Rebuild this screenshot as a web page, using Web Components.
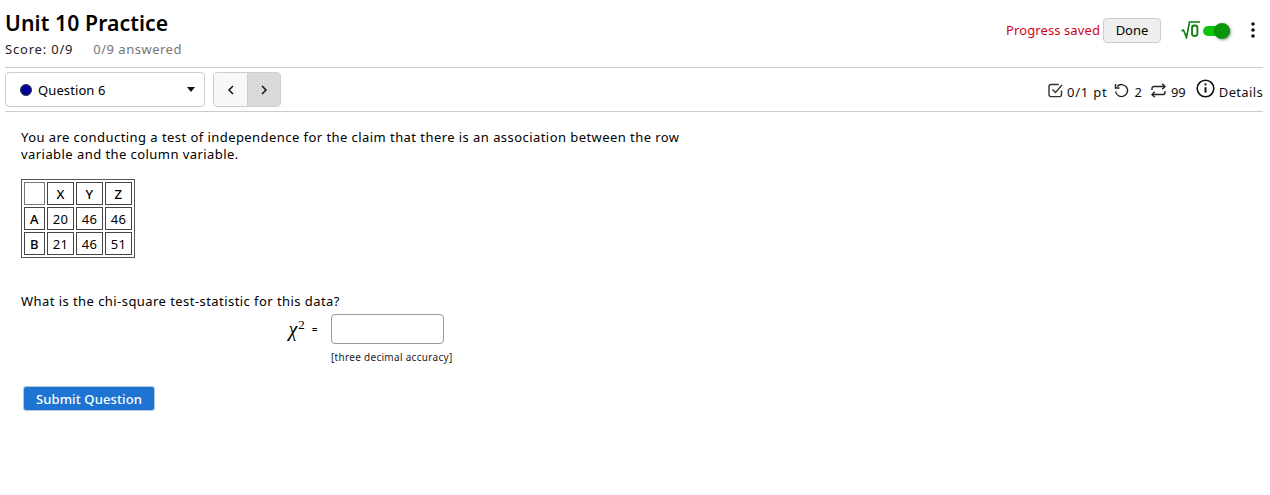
<!DOCTYPE html>
<html>
<head>
<meta charset="utf-8">
<title>Unit 10 Practice</title>
<style>
  body { margin: 0; background: #fff; font-family: "Noto Sans", "DejaVu Sans", sans-serif; color: #000; }
</style>
</head>
<body>
<assess-header title-text="Unit 10 Practice" score="Score: 0/9" answered="0/9 answered"></assess-header>
<question-bar label="Question 6"></question-bar>
<question-body>
  <p>You are conducting a test of independence for the claim that there is an association between the row<br>variable and the column variable.</p>
  <data-table></data-table>
  <p class="ask">What is the chi-square test-statistic for this data?</p>
  <chi-answer></chi-answer>
  <submit-button>Submit Question</submit-button>
</question-body>

<script>
const FONT = `"Noto Sans", "DejaVu Sans", sans-serif`

class AssessHeader extends HTMLElement {
  constructor() {
    super()
    const shadow = this.attachShadow({ mode: 'open' })
    shadow.innerHTML = `
    <style>
      :host { display: flex; justify-content: space-between; height: 67px; margin: 0 7px 0 5px; padding-right: 8px; border-bottom: 1px solid #ccc; font-family: ${FONT}; }
      h1 { margin: 8px 0 0; font-size: 21.2px; line-height: 29px; font-weight: 600; letter-spacing: .1px; }
      .sub { margin-top: 3px; font-size: 13px; line-height: 18px; display: flex; gap: 20px; color: #222; }
      .sub span { letter-spacing: .8px; }
      .sub span + span { color: #767676; letter-spacing: .5px; }
      .right { display: flex; align-items: center; height: 26px; margin-top: 17px; }
      .saved { color: #d0021b; font-size: 13px; letter-spacing: .1px; margin-right: 3px; }
      button { width: 58px; height: 25px; padding: 0; border: 1px solid #ccc; border-radius: 4px; background: #efefef; font: 13px ${FONT}; color: #000; }
      .sq { margin-left: 20px; display: block; }
      .toggle { position: relative; width: 27px; height: 10px; margin: 1px 0 0 3px; border-radius: 5px; background: #0fc40f; }
      .toggle::after { content: ""; position: absolute; right: 0; top: -3px; width: 16px; height: 16px; border-radius: 50%; background: #0a960a; box-shadow: 1px 1px 3px rgba(0,0,0,.4); }
      .dots { margin-left: 21px; display: block; }
    </style>
    <div>
      <h1>${this.getAttribute('title-text')}</h1>
      <div class="sub"><span>${this.getAttribute('score')}</span><span>${this.getAttribute('answered')}</span></div>
    </div>
    <div class="right">
      <span class="saved">Progress saved</span>
      <button>Done</button>
      <svg class="sq" width="19" height="18" viewBox="0 0 19 18" fill="none" stroke="#0a7d0a"><path d="M.5 10l2-1 3 7.5L8.5 1H19" stroke-width="1.6"/><rect x="11" y="4.5" width="5.4" height="10.5" rx="2.4" stroke-width="1.8"/></svg>
      <div class="toggle"></div>
      <svg class="dots" width="4" height="16" viewBox="0 0 4 16" fill="#111"><circle cx="2" cy="2" r="1.8"/><circle cx="2" cy="8" r="1.8"/><circle cx="2" cy="14" r="1.8"/></svg>
    </div>`
  }
}

class QuestionBar extends HTMLElement {
  constructor() {
    super()
    const shadow = this.attachShadow({ mode: 'open' })
    shadow.innerHTML = `
    <style>
      :host { display: flex; justify-content: space-between; align-items: center; height: 43px; margin: 0 7px 0 5px; border-bottom: 1px solid #ccc; font-family: ${FONT}; font-size: 13px; }
      .left { display: flex; gap: 8px; }
      .select { box-sizing: border-box; width: 200px; height: 35px; display: flex; align-items: center; border: 1px solid #ccc; border-radius: 4px; padding: 0 9px 0 14px; letter-spacing: .1px; }
      .dot { width: 12px; height: 12px; border-radius: 50%; background: #00009c; border: 1px solid #333; box-sizing: border-box; margin-right: 6px; }
      .label { flex: 1; }
      .caret { width: 0; height: 0; border: 4px solid transparent; border-top: 5px solid #111; border-bottom: 0; }
      .pager { display: flex; height: 35px; box-sizing: border-box; border: 1px solid #ccc; border-radius: 4px; overflow: hidden; }
      .pager div { width: 33px; display: flex; align-items: center; justify-content: center; background: #f7f7f7; }
      .pager div + div { width: 32px; background: #d9d9d9; border-left: 1px solid #ccc; }
      .meta { display: flex; align-items: center; color: #111; padding-top: 4px; }
      .meta svg { display: block; }
      .meta svg.up { margin-top: -6px; }
      .meta svg.ic { margin-top: -2px; }
    </style>
    <div class="left">
      <div class="select"><span class="dot"></span><span class="label">${this.getAttribute('label')}</span><span class="caret"></span></div>
      <div class="pager">
        <div><svg width="8" height="12" viewBox="0 0 8 12" fill="none" stroke="#111" stroke-width="1.5"><path d="M6 2L2 6l4 4"/></svg></div>
        <div><svg width="8" height="12" viewBox="0 0 8 12" fill="none" stroke="#111" stroke-width="1.5"><path d="M2 2l4 4-4 4"/></svg></div>
      </div>
    </div>
    <div class="meta">
      <svg class="ic" width="15" height="15" viewBox="0 0 15 15" fill="none" stroke="#333" stroke-width="1.4"><path d="M13.5 7.5v4.3a1.8 1.8 0 0 1-1.8 1.8H2.8A1.8 1.8 0 0 1 1 11.8V3.3a1.8 1.8 0 0 1 1.8-1.8h8"/><path d="M4.5 6.5l3 3 6.5-7.5"/></svg>
      <span style="margin-left:4px;letter-spacing:.8px">0/1 pt</span>
      <svg class="ic" style="margin-left:7px" width="15" height="15" viewBox="0 0 15 15" fill="none" stroke="#222" stroke-width="1.4"><path d="M3.2 3.4A6 6 0 1 1 1.6 8.5"/><path d="M1.5 1v4h4"/></svg>
      <span style="margin-left:5px">2</span>
      <svg class="ic" style="margin-left:9px" width="15" height="15" viewBox="0 0 15 15" fill="none" stroke="#222" stroke-width="1.4"><path d="M1 7V5.5A2 2 0 0 1 3 3.5h11"/><path d="M11.2 .8l2.8 2.7-2.8 2.7"/><path d="M14 8v1.5a2 2 0 0 1-2 2H1"/><path d="M3.8 8.8L1 11.5l2.8 2.7"/></svg>
      <span style="margin-left:5px">99</span>
      <svg class="up" style="margin-left:10px" width="19" height="19" viewBox="0 0 19 19" fill="none" stroke="#111" stroke-width="1.6"><circle cx="9.5" cy="9.5" r="8.3"/><path d="M9.5 8.2v5.4" stroke-width="2"/><circle cx="9.5" cy="5.4" r="1.1" fill="#111" stroke="none"/></svg>
      <span style="margin-left:4px;letter-spacing:.35px">Details</span>
    </div>`
  }
}

class QuestionBody extends HTMLElement {
  constructor() {
    super()
    const shadow = this.attachShadow({ mode: 'open' })
    shadow.innerHTML = `
    <style>
      :host { display: block; padding: 17px 21px 0; font-family: ${FONT}; font-size: 13px; line-height: 17px; letter-spacing: .44px; }
      ::slotted(p) { margin: 0; }
      ::slotted(.ask) { margin-top: 35px; }
    </style>
    <slot></slot>`
  }
}

class DataTable extends HTMLElement {
  constructor() {
    super()
    const shadow = this.attachShadow({ mode: 'open' })
    const rows = [['', 'X', 'Y', 'Z'], ['A', '20', '46', '46'], ['B', '21', '46', '51']]
    shadow.innerHTML = `
    <style>
      :host { display: block; margin-top: 16px; }
      table { border-collapse: separate; border-spacing: 2px; border: 1px solid #555; }
      td { box-sizing: border-box; height: 23px; padding: 1px 0 0; text-align: center; border: 1px solid #444; font-size: 13px; letter-spacing: .3px; line-height: 17px; }
      td:nth-child(1) { width: 21px; }
      td:nth-child(n+2) { width: 27px; }
      tr:first-child td:first-child { border-color: #777; }
      .h { font-weight: 500; }
    </style>
    <table>${rows.map((r, i) => `<tr>${r.map((c, j) => `<td class="${(i == 0 || j == 0) ? 'h' : ''}">${c}</td>`).join('')}</tr>`).join('')}</table>`
  }
}

class ChiAnswer extends HTMLElement {
  constructor() {
    super()
    const shadow = this.attachShadow({ mode: 'open' })
    shadow.innerHTML = `
    <style>
      :host { display: grid; grid-template-columns: 310px 113px; margin-top: 4px; }
      .eq { display: flex; justify-content: flex-end; align-items: center; gap: 7px; padding-right: 13px; font-size: 10px; }
      .chi { font: italic 20px "Liberation Serif", serif; letter-spacing: 0; }
      sup { font: 13px "Liberation Serif", serif; vertical-align: 7px; line-height: 0; margin-left: 1px; }
      .box { box-sizing: border-box; height: 30px; border: 1px solid #999; border-radius: 4px; }
      .hint { grid-column: 2; white-space: nowrap; margin-top: 6px; font-size: 10px; line-height: 14px; letter-spacing: .3px; color: #222; }
    </style>
    <div class="eq"><span class="chi">χ<sup>2</sup></span><span>=</span></div>
    <div class="box"></div>
    <div class="hint">[three decimal accuracy]</div>`
  }
}

class SubmitButton extends HTMLElement {
  constructor() {
    super()
    const shadow = this.attachShadow({ mode: 'open' })
    shadow.innerHTML = `
    <style>
      :host { display: block; margin: 22px 0 0 2px; }
      button { width: 132px; height: 25px; padding: 0; border: 1px solid #b5c7dc; border-radius: 3px; background: #1e74d2; color: #fff; font: 500 13px ${FONT}; letter-spacing: .12px; }
    </style>
    <button><slot></slot></button>`
  }
}

customElements.define('assess-header', AssessHeader)
customElements.define('question-bar', QuestionBar)
customElements.define('question-body', QuestionBody)
customElements.define('data-table', DataTable)
customElements.define('chi-answer', ChiAnswer)
customElements.define('submit-button', SubmitButton)
</script>
</body>
</html>
